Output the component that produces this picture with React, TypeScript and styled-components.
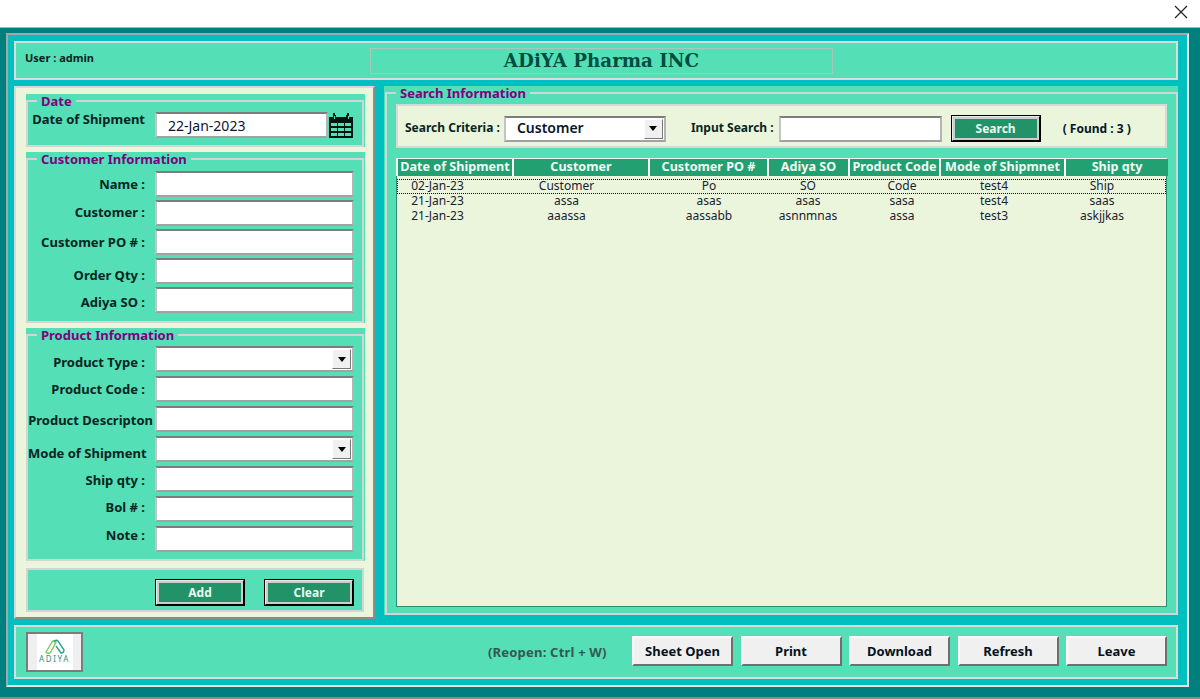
import React, {FC} from 'react';
import styled, {createGlobalStyle} from 'styled-components';

const MINT = '#54dfb6';
const PALE = '#eaf5dc';
const FONT = '"Noto Sans", "Open Sans", sans-serif';

const GlobalStyle = createGlobalStyle`
  html, body {
    margin: 0;
    padding: 0;
    width: 1200px;
    height: 699px;
    overflow: hidden;
    background: #fff;
    font-family: ${FONT};
  }
  * { box-sizing: border-box; }
`

const customerFields = [
    {label: 'Name :', top: 5},
    {label: 'Customer :', top: 4},
    {label: 'Customer PO # :', top: 5},
    {label: 'Order Qty :', top: 9},
    {label: 'Adiya SO :', top: 7},
]

const productFields = [
    {label: 'Product Type :', top: 8, combo: true},
    {label: 'Product Code :', top: 5},
    {label: 'Product Descripton', top: 6, over: 8},
    {label: 'Mode of Shipment', top: 9, combo: true},
    {label: 'Ship qty :', top: 6},
    {label: 'Bol # :', top: 3},
    {label: 'Note :', top: 1},
]

const headers = [
    {title: 'Date of Shipment', width: 115},
    {title: 'Customer', width: 135},
    {title: 'Customer PO #', width: 118},
    {title: 'Adiya SO', width: 80},
    {title: 'Product Code', width: 90},
    {title: 'Mode of Shipmnet', width: 124},
    {title: 'Ship qty', width: 103},
]

const rows = [
    ['02-Jan-23', 'Customer', 'Po', 'SO', 'Code', 'test4', 'Ship'],
    ['21-Jan-23', 'assa', 'asas', 'asas', 'sasa', 'test4', 'saas'],
    ['21-Jan-23', 'aaassa', 'aassabb', 'asnnmnas', 'assa', 'test3', 'askjjkas'],
]

const actions = ['Sheet Open', 'Print', 'Download', 'Refresh', 'Leave']

const CalendarIcon: FC = () => (
    <svg width="26" height="27" viewBox="0 0 26 27">
        <path fill="#01140f" d="M1 5h4V3h3v2h10V3h3v2h4v21H1z"/>
        <path fill="none" stroke="#01140f" strokeWidth="2" d="M6 1v5M20 1v5"/>
        <path fill={MINT} d="M6 4h1v3H6zM20 4h1v3h-1z"/>
        <g fill={MINT}>
            <rect x="3" y="11" width="6" height="3"/>
            <rect x="10" y="11" width="6" height="3"/>
            <rect x="17" y="11" width="6" height="3"/>
            <rect x="3" y="16" width="6" height="3"/>
            <rect x="10" y="16" width="6" height="3"/>
            <rect x="17" y="16" width="6" height="3"/>
            <rect x="3" y="21" width="6" height="3"/>
            <rect x="10" y="21" width="6" height="3"/>
            <rect x="17" y="21" width="6" height="3"/>
        </g>
    </svg>
)

const LogoMark: FC = () => (
    <svg width="22" height="15" viewBox="0 0 22 15">
        <path d="M2 13 L8 3 Q10 0 12 3 L9 9 L6 14 Q3 15 2 13z" fill="none" stroke="#7cc65a" strokeWidth="1.4"/>
        <path d="M10 3 Q12 0 14 2 L20 11 Q20 14 17 14 L12 7" fill="none" stroke="#2aa58f" strokeWidth="1.4"/>
    </svg>
)

const Combo: FC<{value?: string, big?: boolean}> = ({value, big}) => (
    <ComboBox $big={big}>
        <ComboValue>{value}</ComboValue>
        <ComboArrow><i/></ComboArrow>
    </ComboBox>
)

const App: FC = () => {
    return <Page>
        <GlobalStyle/>
        <TitleBar>
            <svg width="14" height="14" viewBox="0 0 14 14">
                <path d="M1 1l12 12M13 1L1 13" stroke="#222" strokeWidth="1.2" fill="none"/>
            </svg>
        </TitleBar>
        <WindowBody>
            <Frame>
                <Header>
                    <UserText>User : admin</UserText>
                    <TitleBox>ADiYA Pharma INC</TitleBox>
                </Header>

                <Main>
                    <LeftPanel>
                        <Group>
                            <Fields $gap={0} $pad={4} $bottom={6}>
                                <Legend $left={9}>Date</Legend>
                                <Row>
                                    <Label $top={-1}>Date of Shipment</Label>
                                    <DateRow>
                                        <DateInput defaultValue="22-Jan-2023" readOnly/>
                                        <CalendarIcon/>
                                    </DateRow>
                                </Row>
                            </Fields>
                        </Group>
                        <Group>
                            <Fields $gap={2} $pad={5} $bottom={7}>
                                <Legend $left={9}>Customer Information</Legend>
                                {customerFields.map(f => <Row key={f.label}>
                                    <Label $top={f.top}>{f.label}</Label>
                                    <TextInput readOnly/>
                                </Row>)}
                            </Fields>
                        </Group>
                        <Group>
                            <Fields $gap={3} $pad={4} $bottom={6}>
                                <Legend $left={9}>Product Information</Legend>
                                {productFields.map(f => <Row key={f.label}>
                                    <Label $top={f.top} $over={f.over}>{f.label}</Label>
                                    {f.combo ? <Combo/> : <TextInput readOnly/>}
                                </Row>)}
                            </Fields>
                        </Group>
                        <ActionBox>
                            <GreenButton $width={90}>Add</GreenButton>
                            <GreenButton $width={90}>Clear</GreenButton>
                        </ActionBox>
                    </LeftPanel>

                    <RightPanel>
                        <SearchFields>
                            <Legend $left={0}>Search Information</Legend>
                            <SearchBar>
                                <SearchLabel $right={4}>Search Criteria :</SearchLabel>
                                <Combo value="Customer" big/>
                                <SearchLabel $left={25} $right={5}>Input Search :</SearchLabel>
                                <SearchInput readOnly/>
                                <GreenButton $width={90}>Search</GreenButton>
                                <FoundText>( Found : 3 )</FoundText>
                            </SearchBar>
                            <GridHead>
                                {headers.map(h => <HeadCell key={h.title} $width={h.width}>{h.title}</HeadCell>)}
                            </GridHead>
                            <GridBody>
                                {rows.map((r, i) => <GridRow key={i} $focused={i === 0}>
                                    {r.map((c, j) => <span key={j}>{c}</span>)}
                                </GridRow>)}
                            </GridBody>
                        </SearchFields>
                    </RightPanel>
                </Main>

                <Footer>
                    <LogoBox>
                        <LogoInner>
                            <LogoMark/>
                            <LogoText>ADIYA</LogoText>
                        </LogoInner>
                    </LogoBox>
                    <Hint>(Reopen: Ctrl + W)</Hint>
                    <FooterButtons>
                        {actions.map(a => <GrayButton key={a}>{a}</GrayButton>)}
                    </FooterButtons>
                </Footer>
            </Frame>
        </WindowBody>
    </Page>
};
export default App;

const Page = styled.div`
  width: 1200px;
  height: 699px;
  display: flex;
  flex-direction: column;
`
const TitleBar = styled.div`
  height: 27px;
  flex: none;
  display: flex;
  align-items: center;
  justify-content: flex-end;
  padding: 0 12px 3px 0;
  background: #fff;
`
const WindowBody = styled.div`
  flex: 1;
  background: #007f7f;
  border-top: 1px solid #9fb8b8;
  border-bottom: 2px solid #8a8a8a;
  padding: 5px 11px 10px 6px;
`
const Frame = styled.div`
  height: 100%;
  background: #00bfbf;
  border: 2px solid;
  border-color: #a6a6a6 #e8e8e8 #e8e8e8 #a6a6a6;
  padding: 6px 9px 6px 6px;
  display: flex;
  flex-direction: column;
  gap: 6px;
`
const Header = styled.div`
  height: 39px;
  flex: none;
  display: grid;
  grid-template-columns: 345px 463px;
  background: ${MINT};
  border: 2px solid #dcdcdc;
  padding: 5px 0 4px 9px;
`
const UserText = styled.div`
  font-size: 11px;
  font-weight: 700;
  color: #06251f;
  line-height: 16px;
  padding-top: 2px;
`
const TitleBox = styled.div`
  border: 1px solid #a9c8bc;
  font-family: "DejaVu Serif", serif;
  font-weight: 700;
  font-size: 18.3px;
  line-height: 23px;
  color: #004d40;
  text-align: center;
`
const Main = styled.div`
  flex: none;
  height: 533px;
  display: grid;
  grid-template-columns: 361px 794px;
  gap: 9px;
`
const LeftPanel = styled.div`
  background: ${PALE};
  border: 2px solid;
  border-color: #d8d8d8 #8c8c8c #8c8c8c #d8d8d8;
  padding: 6px 8px 0 10px;
  display: flex;
  flex-direction: column;
  gap: 5px;
`
const Group = styled.div`
  background: ${MINT};
`
const Fields = styled.fieldset<{$gap: number, $pad: number, $bottom: number}>`
  margin: 0 1px 0 0;
  min-width: 0;
  border: 2px solid #d4d4d4;
  padding: ${p => p.$pad}px 8px ${p => p.$bottom}px 0;
  display: flex;
  flex-direction: column;
  gap: ${p => p.$gap}px;
`
const Legend = styled.legend<{$left: number}>`
  margin-left: ${p => p.$left}px;
  padding: 0 4px;
  font-size: 13px;
  font-weight: 700;
  line-height: 14px;
  color: #800080;
`
const Row = styled.div`
  display: grid;
  grid-template-columns: 117px 199px;
  column-gap: 10px;
  height: 27px;
`
const Label = styled.label<{$top: number, $over?: number}>`
  font-size: 13px;
  font-weight: 700;
  line-height: 16px;
  color: #06251f;
  text-align: right;
  white-space: nowrap;
  direction: rtl;
  unicode-bidi: plaintext;
  margin-top: ${p => p.$top}px;
  margin-right: ${p => -(p.$over || 0)}px;
`
const sunken = `
  border: 2px solid;
  border-color: #7d7d7d #b4b4b4 #a2a2a2 #c4c4c4;
  background: #fff;
`
const TextInput = styled.input`
  ${sunken};
  width: 199px;
  height: 26px;
  padding: 0 4px;
  outline: none;
`
const DateRow = styled.div`
  display: flex;
  align-items: flex-start;
`
const DateInput = styled.input`
  ${sunken};
  width: 173px;
  height: 26px;
  padding: 0 0 0 11px;
  font-family: ${FONT};
  font-size: 14px;
  color: #0c1430;
  outline: none;
`
const ComboBox = styled.div<{$big?: boolean}>`
  ${sunken};
  width: ${p => p.$big ? 162 : 199}px;
  height: 26px;
  flex: none;
  display: flex;
  justify-content: space-between;
  padding-right: 1px;
`
const ComboValue = styled.div`
  font-size: 14px;
  font-weight: 600;
  line-height: 19px;
  padding-left: 11px;
  color: #06152a;
`
const ComboArrow = styled.div`
  width: 19px;
  height: 20px;
  margin-top: 1px;
  background: #f0f0f0;
  border: 1px solid;
  border-color: #fff #777 #777 #fff;
  display: flex;
  align-items: center;
  justify-content: center;

  i {
    width: 0;
    height: 0;
    border: 4px solid transparent;
    border-top: 5px solid #000;
    border-bottom: 0;
  }
`
const ActionBox = styled.div`
  margin: 2px 1px 0 0;
  height: 44px;
  background: ${MINT};
  border: 2px solid #d4d4d4;
  display: flex;
  justify-content: flex-end;
  align-items: flex-start;
  gap: 19px;
  padding: 9px 8px 0 0;
`
const GreenButton = styled.button<{$width: number}>`
  width: ${p => p.$width}px;
  height: 27px;
  flex: none;
  padding: 0;
  background: #229268;
  border: 2px solid;
  border-color: #e8e8e8 #000 #000 #e8e8e8;
  outline: 1px solid #000;
  outline-offset: -1px;
  box-shadow: inset 0 0 0 2px #c8d0cc;
  color: #eef8f0;
  font-family: ${FONT};
  font-size: 12px;
  font-weight: 700;
`
const RightPanel = styled.div`
  background: ${MINT};
  height: 529px;
`
const SearchFields = styled.fieldset`
  margin: 0 0 0 1px;
  height: 100%;
  min-width: 0;
  border: 2px solid #d4d4d4;
  padding: 4px 9px 6px 9px;
  display: flex;
  flex-direction: column;
`
const SearchBar = styled.div`
  height: 44px;
  flex: none;
  background: ${PALE};
  border: 2px solid #d8d8d8;
  display: flex;
  align-items: center;
  padding: 5px 0 0 7px;
`
const SearchLabel = styled.span<{$left?: number, $right: number}>`
  font-size: 12px;
  font-weight: 700;
  color: #06251f;
  white-space: nowrap;
  margin-left: ${p => p.$left || 0}px;
  margin-right: ${p => p.$right}px;
  margin-bottom: 3px;
`
const SearchInput = styled.input`
  ${sunken};
  width: 163px;
  height: 26px;
  flex: none;
  margin-right: 9px;
  outline: none;
`
const FoundText = styled.span`
  margin-left: 22px;
  font-size: 12px;
  font-weight: 700;
  color: #06152a;
  white-space: nowrap;
`
const GridHead = styled.div`
  margin-top: 10px;
  flex: none;
  display: flex;
  height: 18px;
  border: 1px solid #f4f4f4;
  border-bottom: 0;
  background: #fff;
  gap: 1px;
`
const HeadCell = styled.div<{$width: number}>`
  width: ${p => p.$width}px;
  flex: none;
  background: #23a072;
  border-left: 1px solid #f4f4f4;
  color: #f2faf4;
  font-size: 12.6px;
  font-weight: 700;
  line-height: 16px;
  text-align: center;
  white-space: nowrap;
  overflow: hidden;
`
const GridBody = styled.div`
  flex: 1;
  background: ${PALE};
  border: 1px solid #2c8f74;
  border-top: 0;
  padding-top: 3px;
`
const GridRow = styled.div<{$focused?: boolean}>`
  display: grid;
  grid-template-columns: 81px 177px 108px 90px 98px 86px 130px;
  height: 15px;
  font-size: 12px;
  line-height: 14px;
  color: #1a2230;
  text-align: center;
  outline: ${p => p.$focused ? '1px dotted #111' : 'none'};
  outline-offset: -1px;
`
const Footer = styled.div`
  height: 54px;
  flex: none;
  background: ${MINT};
  border: 2px solid #dcdcdc;
  display: flex;
  align-items: center;
  padding: 0 9px 2px 10px;
`
const LogoBox = styled.div`
  width: 57px;
  height: 40px;
  flex: none;
  margin-top: 2px;
  background: #efefef;
  border: 2px solid #7c7c7c;
  display: flex;
  justify-content: center;
`
const LogoInner = styled.div`
  width: 36px;
  background: #fff;
  display: flex;
  flex-direction: column;
  align-items: center;
  padding-top: 5px;
`
const LogoText = styled.span`
  font-size: 8px;
  line-height: 10px;
  letter-spacing: 1.6px;
  color: #2f8f8a;
`
const Hint = styled.span`
  margin-left: 405px;
  margin-top: 2px;
  font-size: 13px;
  letter-spacing: 0.2px;
  font-weight: 700;
  color: #34594f;
  white-space: nowrap;
`
const FooterButtons = styled.div`
  margin-left: auto;
  display: flex;
  gap: 7.5px;
`
const GrayButton = styled.button`
  width: 101px;
  height: 30px;
  padding: 0;
  background: #f0f0f0;
  border: 2px solid;
  border-color: #fafafa #6f6f6f #6f6f6f #fafafa;
  color: #04121c;
  font-family: ${FONT};
  font-size: 13px;
  font-weight: 700;
`
